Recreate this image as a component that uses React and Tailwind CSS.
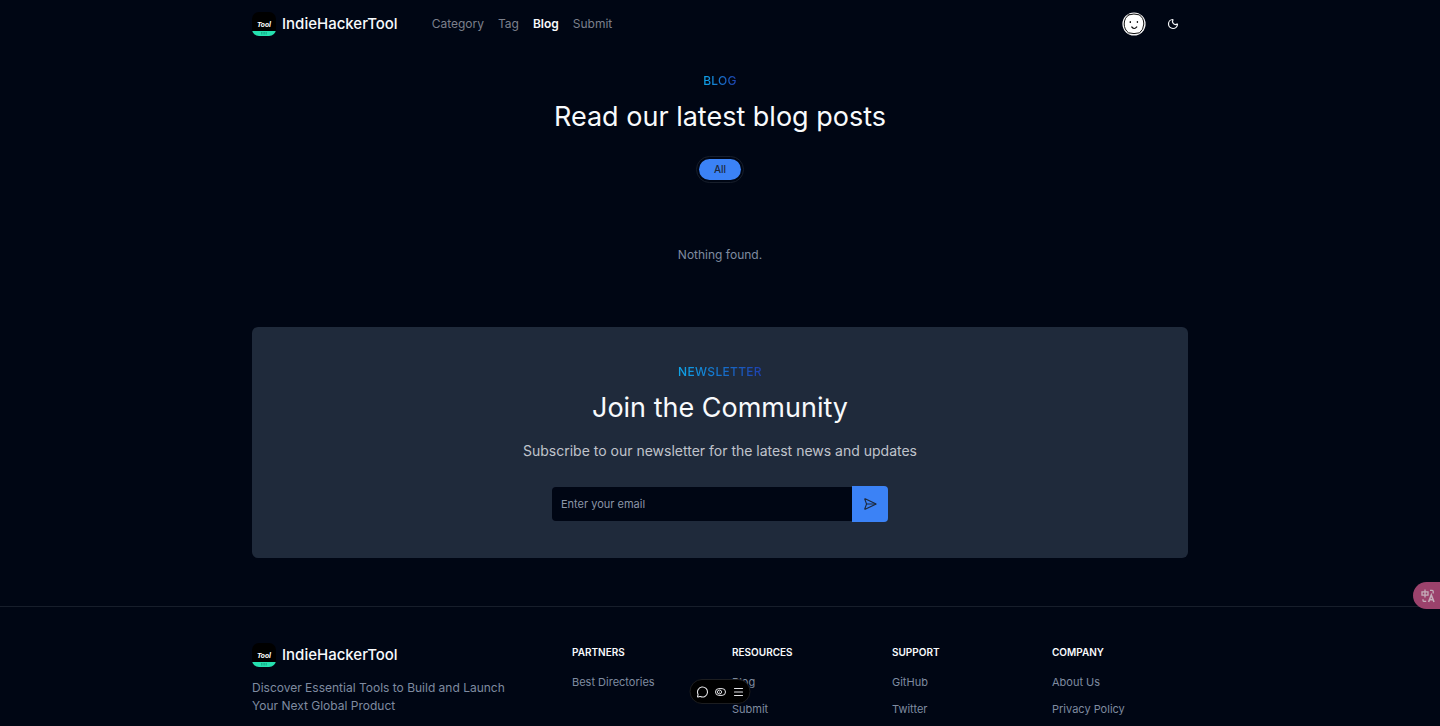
import React, { useState } from 'react';
import { Menu, MessageCircle, Moon, SendHorizontal } from 'lucide-react';

const navLinks = ['Category', 'Tag', 'Blog', 'Submit'];

const footerColumns = [
  { title: 'Partners', links: ['Best Directories'] },
  { title: 'Resources', links: ['Blog', 'Submit'] },
  { title: 'Support', links: ['GitHub', 'Twitter'] },
  { title: 'Company', links: ['About Us', 'Privacy Policy'] },
];

const Logo = () => (
  <a href="#home" className="flex items-center gap-1.5">
    <svg viewBox="0 0 24 24" className="size-6 shrink-0" aria-hidden="true">
      <clipPath id="logo-clip"><rect width="24" height="24" rx="7" /></clipPath>
      <g clipPath="url(#logo-clip)">
        <rect width="24" height="24" fill="#000" />
        <rect y="19" width="24" height="5" fill="#25e0b0" />
      </g>
      <text x="12" y="14.5" textAnchor="middle" fontFamily="Roboto, sans-serif" fontSize="7.5" fontWeight="700" fontStyle="italic" fill="#fff">Tool</text>
      <path d="M9 20.7h6M9 21.9h6" stroke="#0c8f72" strokeWidth=".8" strokeDasharray="1 .6" />
    </svg>
    <span className="text-[15px] leading-6 font-medium text-slate-50">IndieHackerTool</span>
  </a>
);

const Header = () => (
  <header className="mx-auto flex h-12 w-full max-w-[936px] items-center">
    <Logo />
    <nav className="ml-[34px] flex items-center gap-3.5 text-xs">
      {navLinks.map((link) => (
        <a key={link} href={`#${link.toLowerCase()}`} className={link === 'Blog' ? 'font-semibold text-slate-50' : 'text-[#7c808c]'}>
          {link}
        </a>
      ))}
    </nav>
    <div className="ml-auto flex items-center gap-3">
      <button type="button" aria-label="Account" className="size-6">
        <svg viewBox="0 0 24 24" className="size-6" fill="none" stroke="#111" strokeLinecap="round">
          <circle cx="12" cy="12" r="11.6" fill="#f4f4f5" stroke="none" />
          <path d="M7 2.8Q12 1.2 17 2.8Q21.8 5.5 21.8 12Q21.5 18 17.5 20.8Q12 22.4 6.5 20.8Q2.3 17.5 2.2 12Q2.3 5.5 7 2.8Z" fill="#fff" strokeWidth="1" />
          <path d="M8.3 9.8v.6M15.4 9.6v.6" strokeWidth="1.4" />
          <path d="M9.8 15q2.5 3 5-.1" strokeWidth="1.2" />
        </svg>
      </button>
      <button type="button" aria-label="Toggle theme" className="flex size-[30px] items-center justify-center text-slate-50">
        <Moon size={12} strokeWidth={2.4} />
      </button>
    </div>
  </header>
);

const SectionTitle = ({ label, title }) => (
  <>
    <p className="bg-linear-to-r/srgb from-[#0ea5e9] to-[#1e40af] bg-clip-text text-xs leading-[18px] font-medium tracking-wide text-transparent uppercase">{label}</p>
    <h2 className="mt-[9px] text-[27px] leading-9 text-slate-50">{title}</h2>
  </>
);

const Newsletter = () => {
  const [email, setEmail] = useState('');

  return (
    <section className="mx-auto flex w-full max-w-[936px] flex-col items-center rounded-md bg-[#1f2a3b] py-9">
      <SectionTitle label="Newsletter" title="Join the Community" />
      <p className="mt-4 text-sm leading-[18px] text-[#c0c4cc]">Subscribe to our newsletter for the latest news and updates</p>
      <form onSubmit={(e) => e.preventDefault()} className="mt-[26px] flex w-full max-w-[336px] items-center">
        <input
          type="email"
          aria-label="Email"
          value={email}
          onChange={(e) => setEmail(e.target.value)}
          placeholder="Enter your email"
          className="h-[34px] min-w-0 flex-1 rounded-l bg-[#000614] px-[9px] text-[11px] text-slate-50 outline-none placeholder:text-[#8b95a7]"
        />
        <button type="submit" aria-label="Subscribe" className="flex size-9 items-center justify-center rounded-r bg-[#3b82f6] text-slate-800">
          <SendHorizontal size={14} strokeWidth={2} />
        </button>
      </form>
    </section>
  );
};

const Footer = () => (
  <footer className="mt-12 border-t border-[#171e2b]">
    <div className="mx-auto grid w-full max-w-[936px] grid-cols-6 gap-6 pt-9">
      <div className="col-span-2">
        <Logo />
        <p className="mt-3 pr-6 text-xs leading-[18px] text-[#7f8ba0]">Discover Essential Tools to Build and Launch Your Next Global Product</p>
      </div>
      {footerColumns.map((column) => (
        <div key={column.title}>
          <h3 className="text-[10px] leading-[18px] font-semibold text-slate-50 uppercase">{column.title}</h3>
          <ul className="mt-3 space-y-[9px] text-[11px] leading-[18px] text-[#7f8ba0]">
            {column.links.map((link) => (
              <li key={link}><a href="#footer">{link}</a></li>
            ))}
          </ul>
        </div>
      ))}
    </div>
  </footer>
);

const Toolbar = () => (
  <div className="fixed bottom-[22px] left-1/2 flex h-[25px] w-[61px] -translate-x-1/2 items-center justify-center gap-1.5 rounded-full border border-[#1c1d20] bg-black text-[#e4e4e7]">
    <button type="button" aria-label="Comments"><MessageCircle size={12} strokeWidth={2.2} /></button>
    <button type="button" aria-label="Draft mode">
      <svg viewBox="0 0 12 12" className="size-3" fill="none" stroke="currentColor">
        <rect x="1" y="2.6" width="10" height="6.8" rx="3.4" />
        <ellipse cx="5" cy="6" rx="2.1" ry="1.9" />
        <circle cx="5" cy="6" r=".6" fill="currentColor" stroke="none" />
      </svg>
    </button>
    <button type="button" aria-label="Menu"><Menu size={12} strokeWidth={2.2} /></button>
  </div>
);

const TranslateButton = () => (
  <button type="button" aria-label="Translate" className="fixed top-[582px] right-0 flex h-[27px] w-[27px] items-center justify-end rounded-l-full bg-[#9b426c] pr-1 text-[#c5aeba]">
    <svg viewBox="0 0 16 16" className="size-4" fill="none" stroke="currentColor" strokeWidth="1.3">
      <path d="M2 3.8h6v3.4H2zM5 1.6v8M10 2.4h2.2q1 0 1 1v2M3 11.2v1q0 1.2 1.2 1.2h2" />
      <path d="m8.6 14 2.7-7 2.7 7M9.6 11.8H13" strokeWidth="1.6" />
    </svg>
  </button>
);

export default function App() {
  return (
    <div className="min-h-screen bg-[#000614] font-[Inter,sans-serif]">
      <Header />
      <main>
        <section className="flex flex-col items-center pt-6">
          <SectionTitle label="Blog" title="Read our latest blog posts" />
          <div className="mt-[21px] rounded-full border border-[#171e2b] p-0.5">
            <button type="button" className="block h-[21px] w-[42px] rounded-full bg-[#3b82f6] text-[10px] font-medium text-slate-800">All</button>
          </div>
          <p className="my-16 text-xs text-[#7f8ba0]">Nothing found.</p>
        </section>
        <Newsletter />
      </main>
      <Footer />
      <Toolbar />
      <TranslateButton />
    </div>
  );
}
